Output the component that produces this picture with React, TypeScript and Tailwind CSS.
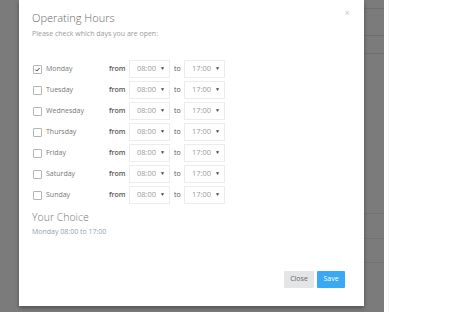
import React from "react";

const days = ["Monday", "Tuesday", "Wednesday", "Thursday", "Friday", "Saturday", "Sunday"];

function Select({ value }: { value: string }) {
  return (
    <div className="w-[41px] h-[18px] border border-[#ececec] flex items-center pl-[7px] pr-[4px] text-[7.5px] text-[#9a9a9a]">
      <span className="flex-1">{value}</span>
      <span className="text-[5px] text-[#444]">▼</span>
    </div>
  );
}

export default function App() {
  return (
    <div className="w-[474px] h-[312px] flex bg-white overflow-hidden" style={{ fontFamily: '"Open Sans", sans-serif' }}>
      <div className="w-[384px] h-full bg-[#7b7b7b] relative">
        <div className="absolute left-[364px] right-0 top-[8px] h-px bg-[#6f6f6f]" />
        <div className="absolute left-[364px] right-0 top-[35px] h-px bg-[#6f6f6f]" />
        <div className="absolute left-[364px] right-0 top-[53px] h-px bg-[#6f6f6f]" />
        <div className="absolute left-[364px] right-0 top-[213px] h-px bg-[#727272]" />
        <div className="absolute left-[364px] right-0 top-[238px] h-px bg-[#727272]" />
        <div className="absolute left-[364px] right-0 top-[262px] h-px bg-[#727272]" />
        <div className="ml-[19px] w-[345px] h-[306px] bg-white shadow-[0_2px_4px_rgba(0,0,0,0.35)] relative flex flex-col pl-[13px] pr-[19px]">
          <span className="absolute right-[14px] top-[8px] text-[9px] text-[#c8c8c8] leading-none">×</span>
          <div className="mt-[10px] text-[11px] font-light text-[#666] leading-[16px]">Operating Hours</div>
          <div className="mt-[3px] text-[7px] text-[#9a9a9a] leading-[10px]">Please check which days you are open:</div>
          <div className="mt-[21px] flex flex-col gap-[3px]">
            {days.map((d, i) => (
              <div key={d} className="flex items-center h-[18px]">
                <div className="w-[9px] h-[9px] border border-[#b5b5b5] rounded-[1px] ml-[1px] flex items-center justify-center">
                  {i === 0 && (
                    <svg viewBox="0 0 10 10" className="w-[7px] h-[7px]">
                      <path d="M2 5.2 L4 7.2 L8 2.8" fill="none" stroke="#333" strokeWidth="1.4" />
                    </svg>
                  )}
                </div>
                <span className="ml-[4px] w-[63px] text-[7px] text-[#777]">{d}</span>
                <span className="w-[20px] text-[7px] font-semibold text-[#555]">from</span>
                <Select value="08:00" />
                <span className="w-[14px] pl-[4px] text-[7px] text-[#555]">to</span>
                <Select value="17:00" />
              </div>
            ))}
          </div>
          <div className="mt-[5px] text-[10.5px] font-light text-[#777] leading-[16px]">Your Choice</div>
          <div className="mt-[2px] text-[7px] text-[#8f9fb3] leading-[10px]">Monday 08:00 to 17:00</div>
          <div className="mt-auto mb-[18px] flex justify-end gap-[3px]">
            <button className="w-[30px] h-[17px] bg-[#e4e5e7] text-[7px] text-[#666] rounded-[1px]">Close</button>
            <button className="w-[28px] h-[17px] bg-[#3aa9f3] text-[7px] text-white rounded-[1px]">Save</button>
          </div>
        </div>
      </div>
      <div className="w-px h-full bg-[#f4f4f4] ml-[4px]" />
    </div>
  );
}
